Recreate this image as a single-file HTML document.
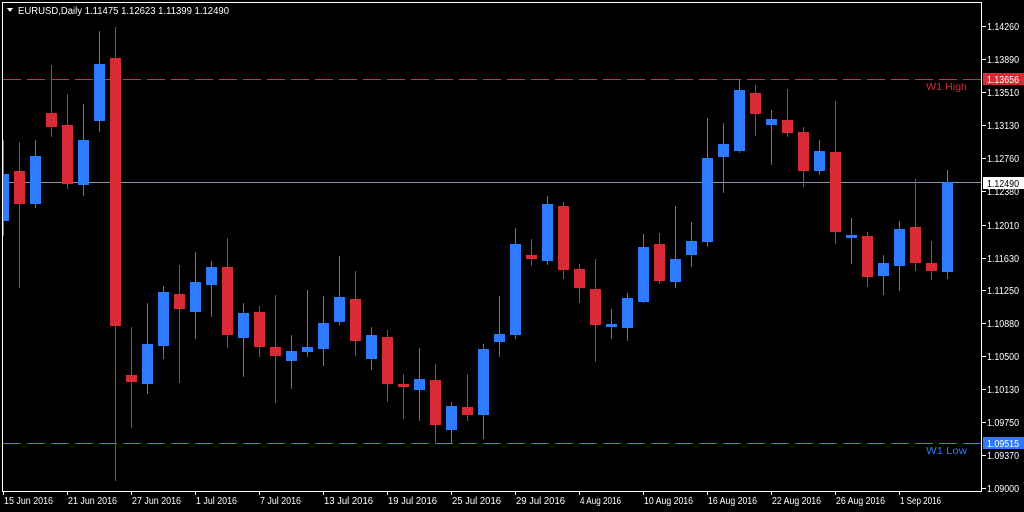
<!DOCTYPE html>
<html><head><meta charset="utf-8"><style>
html,body{margin:0;padding:0;background:#000;width:1024px;height:512px;overflow:hidden}
svg{display:block}
text{font-family:"Liberation Sans",sans-serif;font-size:10px}
</style></head><body>
<svg width="1024" height="512" xmlns="http://www.w3.org/2000/svg" shape-rendering="crispEdges">
<rect width="1024" height="512" fill="#000"/>
<line x1="3" y1="79.5" x2="981" y2="79.5" stroke="#d92b35" stroke-dasharray="18 6"/>
<line x1="3" y1="443.5" x2="981" y2="443.5" stroke="#2e7bff" stroke-dasharray="18 6"/>
<line x1="3" y1="182.5" x2="981" y2="182.5" stroke="#8a96a8"/>
<g id="candles"></g>
<rect x="2" y="2" width="1" height="490" fill="#fff"/>
<rect x="2" y="2" width="980" height="1" fill="#fff"/>
<rect x="981" y="2" width="1" height="490" fill="#fff"/>
<rect x="2" y="491" width="980" height="1" fill="#fff"/>
<polygon points="7,8 13,8 10,12" fill="#fff"/>
<text x="18" y="14" fill="#fff" textLength="211" lengthAdjust="spacingAndGlyphs">EURUSD,Daily  1.11475 1.12623 1.11399 1.12490</text>
<text x="926" y="90" fill="#d92b35" font-size="11" textLength="41" lengthAdjust="spacingAndGlyphs">W1 High</text>
<text x="926" y="454" fill="#2e7bff" font-size="11" textLength="41" lengthAdjust="spacingAndGlyphs">W1 Low</text>
<g fill="#fff" id="ax"></g>
<rect x="983" y="73" width="41" height="12" fill="#d92b35"/>
<text x="987" y="83" fill="#fff" textLength="32" lengthAdjust="spacingAndGlyphs">1.13656</text>
<rect x="983" y="177" width="41" height="12" fill="#fff"/>
<text x="987" y="187" fill="#000" textLength="32" lengthAdjust="spacingAndGlyphs">1.12490</text>
<rect x="983" y="437" width="41" height="12" fill="#2e7bff"/>
<text x="987" y="447" fill="#fff" textLength="32" lengthAdjust="spacingAndGlyphs">1.09515</text>
<g id="dates" fill="#fff"></g>
</svg>
<script>
var NS="http://www.w3.org/2000/svg";
var d=[
[0,140,174,221,235],[1,142,171,204,287],[0,140,156,204,207],[1,65,113,127,136],[1,94,125,184,188],
[0,104,140,185,195],[0,31,64,121,131],[1,27,58,326,480],[1,327,375,382,427],[0,303,344,384,393],
[0,286,292,346,358],[1,265,294,309,382],[0,252,282,312,338],[0,261,267,285,316],[1,238,267,335,347],
[0,303,313,338,376],[1,306,312,347,356],[1,295,347,356,402],[0,335,351,361,388],[0,290,347,352,356],
[0,296,323,349,365],[0,256,297,322,324],[1,271,299,341,355],[0,327,335,359,369],[1,330,337,384,401],
[1,374,384,387,418],[0,348,379,390,420],[1,364,380,425,441],[0,402,406,430,443],[1,374,407,415,420],
[0,344,349,415,438],[0,296,334,342,356],[0,228,244,335,338],[1,239,255,259,265],[0,196,204,261,264],
[1,202,206,270,278],[1,264,269,288,302],[1,259,289,325,361],[0,309,324,327,338],[0,293,298,328,340],
[0,234,247,302,302],[1,233,244,281,283],[0,206,259,282,287],[0,222,241,255,266],[0,118,158,242,246],
[0,123,144,157,192],[0,79,90,151,152],[1,85,93,114,135],[0,110,119,125,164],[1,89,120,133,136],
[1,127,132,171,186],[0,140,151,171,174],[1,101,152,232,243],[0,218,235,238,263],[1,232,236,277,286],
[0,255,263,276,294],[0,221,229,266,290],[1,179,227,263,270],[1,241,263,271,279],[0,170,182,272,278]];
var g=document.getElementById("candles");
function r(p,x,y,w,h,f){var e=document.createElementNS(NS,"rect");e.setAttribute("x",x);e.setAttribute("y",y);e.setAttribute("width",w);e.setAttribute("height",h);e.setAttribute("fill",f);p.appendChild(e);}
function tx(p,x,y,s,w,f){var t=document.createElementNS(NS,"text");t.setAttribute("x",x);t.setAttribute("y",y);t.setAttribute("fill",f);t.setAttribute("textLength",w);t.setAttribute("lengthAdjust","spacingAndGlyphs");t.textContent=s;p.appendChild(t);}
d.forEach(function(c,k){var x=4+16*k,col=c[0]?"#d92b35":"#2e7bff";
r(g,x-1,c[1],1,c[4]-c[1]+1,col);var bx=x-6,bw=11;if(bx<3){bw-=3-bx;bx=3;}r(g,bx,c[2],bw,Math.max(2,c[3]-c[2]),col);});
var ax=document.getElementById("ax");
var L=[["1.14260",26],["1.13890",59],["1.13510",92],["1.13130",125],["1.12760",158],["1.12380",191],["1.12010",225],["1.11630",258],["1.11250",290],["1.10880",323],["1.10500",356],["1.10130",389],["1.09750",422],["1.09370",455],["1.09000",488]];
L.forEach(function(l){r(ax,982,l[1],4,1,"#fff");tx(ax,987,l[1]+4,l[0],32,"#fff");});
var D=["15 Jun 2016","21 Jun 2016","27 Jun 2016","1 Jul 2016","7 Jul 2016","13 Jul 2016","19 Jul 2016","25 Jul 2016","29 Jul 2016","4 Aug 2016","10 Aug 2016","16 Aug 2016","22 Aug 2016","26 Aug 2016","1 Sep 2016"];
var dg=document.getElementById("dates");
D.forEach(function(s,i){var x=3+64*i;r(dg,x,491,1,4,"#fff");tx(dg,x+1,504,s,s.length>10?49:41,"#fff");});
</script>
</body></html>
